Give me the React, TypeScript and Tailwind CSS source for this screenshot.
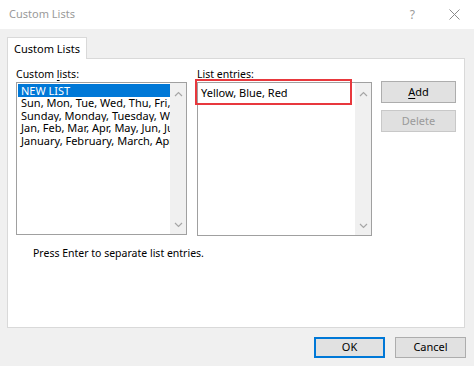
import React from "react";

const font = { fontFamily: '"Noto Sans", "Open Sans", Arial, sans-serif' };

function ScrollBar() {
  return (
    <div className="flex w-[16px] flex-col items-center justify-between self-stretch bg-[#f0f0f0] pb-[6px] pt-[8px]">
      <svg width="9" height="6" viewBox="0 0 9 6">
        <path d="M1 5 L4.5 1.5 L8 5" fill="none" stroke="#a6a6a6" strokeWidth="1.2" />
      </svg>
      <svg width="9" height="6" viewBox="0 0 9 6">
        <path d="M1 1 L4.5 4.5 L8 1" fill="none" stroke="#a6a6a6" strokeWidth="1.2" />
      </svg>
    </div>
  );
}

export default function App() {
  const lists = [
    "Sun, Mon, Tue, Wed, Thu, Fri, Sat",
    "Sunday, Monday, Tuesday, Wednesday",
    "Jan, Feb, Mar, Apr, May, Jun, Jul",
    "January, February, March, April",
  ];
  return (
    <div
      className="flex h-[366px] w-[474px] flex-col bg-[#f0f0f0] text-[10.5px] text-[#000]"
      style={font}
    >
      {/* title bar */}
      <div className="flex h-[29px] items-center bg-white pl-[9px] pr-[14px]">
        <span className="text-[11px] text-[#9a9a9a]">Custom Lists</span>
        <div className="ml-auto flex items-center gap-[34px]">
          <span className="text-[12px] text-[#9a9a9a]">?</span>
          <svg width="11" height="11" viewBox="0 0 11 11">
            <path d="M0.5 0.5 L10.5 10.5 M10.5 0.5 L0.5 10.5" stroke="#8a8a8a" strokeWidth="1" />
          </svg>
        </div>
      </div>

      {/* tab strip */}
      <div className="flex pl-[7px] pt-[8px]">
        <div className="relative z-10 -mb-px flex h-[22px] w-[80px] items-center justify-center border border-b-0 border-[#d9d9d9] bg-white pt-[1px] text-[11px]">
          Custom Lists
        </div>
      </div>

      {/* panel */}
      <div className="mx-[7px] flex h-[270px] w-[458px] flex-col border border-[#d9d9d9] bg-white px-[8px] pt-[7px]">
        <div className="flex">
          {/* left */}
          <div className="flex w-[171px] flex-col">
            <div className="h-[16px] leading-[16px]">
              Custom <span className="underline underline-offset-2">l</span>ists:
            </div>
            <div className="flex h-[153px] border border-[#a0a0a0]">
              <div className="min-w-0 flex-1 overflow-hidden pl-[1px] pt-[1px] text-[11px] leading-[12.7px]">
                <div className="whitespace-nowrap bg-[#0078d7] pl-[3px] leading-[13px] text-white">NEW LIST</div>
                {lists.map((l) => (
                  <div key={l} className="overflow-hidden whitespace-nowrap pl-[3px]">
                    {l}
                  </div>
                ))}
              </div>
              <ScrollBar />
            </div>
          </div>

          {/* right */}
          <div className="ml-[10px] flex w-[177px] flex-col">
            <div className="h-[16px] leading-[16px]">
              List <span className="underline underline-offset-2">e</span>ntries:
            </div>
            <div className="relative flex h-[154px] border border-[#a0a0a0]">
              <div className="flex-1 pl-[3px] pt-[2px] text-[11px]">Yellow, Blue, Red</div>
              <ScrollBar />
              <div className="absolute left-[-3px] top-[-4px] h-[26px] w-[157px] border-2 border-[#e8383d]" />
            </div>
          </div>

          {/* buttons */}
          <div className="ml-[9px] flex flex-col gap-[7px] pt-[15px]">
            <button className="flex h-[22px] w-[75px] items-center justify-center border border-[#adadad] bg-[#e1e1e1] text-[11px]">
              <span>
                <span className="underline underline-offset-2">A</span>dd
              </span>
            </button>
            <button className="flex h-[22px] w-[75px] items-center justify-center border border-[#c8c8c8] bg-[#e0e0e0] text-[11px] text-[#9a9a9a]">
              Delete
            </button>
          </div>
        </div>

        <div className="mt-[9px] pl-[17px] leading-[16px]">Press Enter to separate list entries.</div>
      </div>

      {/* footer */}
      <div className="flex justify-end gap-[10px] pr-[8px] pt-[9px]">
        <button className="flex h-[21px] w-[71px] items-center justify-center border-2 border-[#0078d7] bg-[#e1e1e1] text-[11px]">
          OK
        </button>
        <button className="flex h-[21px] w-[71px] items-center justify-center border border-[#adadad] bg-[#e1e1e1] text-[11px]">
          Cancel
        </button>
      </div>
    </div>
  );
}
